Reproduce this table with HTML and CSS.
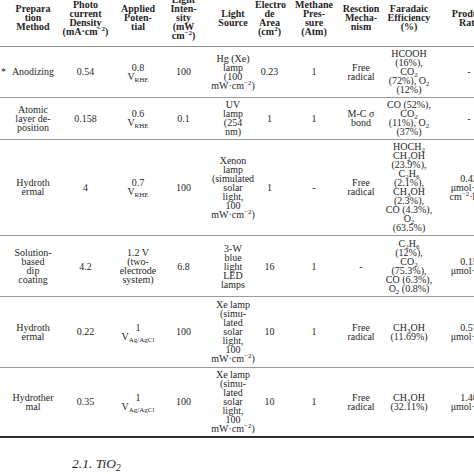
FILE: index.html
```html
<!DOCTYPE html>
<html lang="en">
<head>
<meta charset="utf-8">
<title>Table</title>
<link rel="stylesheet" href="styles.css">
</head>
<body>
<table class="data">
  <colgroup>
    <col class="w0"><col class="w1"><col class="w2"><col class="w3"><col class="w4"><col class="w5"><col class="w6"><col class="w7"><col class="w8"><col class="w9"><col class="w10">
  </colgroup>
  <thead>
    <tr>
      <th></th>
      <th>Prepara<br>tion<br>Method</th>
      <th>Photo<br>current<br>Density<br>(mA·cm<sup>−2</sup>)</th>
      <th class="c3">Applied<br>Poten-<br>tial</th>
      <th>Light<br>Inten-<br>sity<br>(mW<br>cm<sup>−2</sup>)</th>
      <th class="c5">Light<br>Source</th>
      <th class="c6">Electro<br>de<br>Area<br>(cm<sup>2</sup>)</th>
      <th>Methane<br>Pres-<br>sure<br>(Atm)</th>
      <th>Resction<br>Mecha-<br>nism</th>
      <th>Faradaic<br>Efficiency<br>(%)</th>
      <th>Product<br>Rate</th>
    </tr>
  </thead>
  <tbody>
    <tr>
      <td class="ref">*</td>
      <td>Anodizing</td>
      <td>0.54</td>
      <td class="c3">0.8<br>V<sub>RHE</sub></td>
      <td>100</td>
      <td class="c5">Hg (Xe)<br>lamp<br>(100<br>mW·cm<sup>−2</sup>)</td>
      <td class="c6">0.23</td>
      <td>1</td>
      <td>Free<br>radical</td>
      <td>HCOOH<br>(16%),<br>CO<sub>2</sub><br>(72%), O<sub>2</sub><br>(12%)</td>
      <td>-</td>
    </tr>
    <tr>
      <td class="ref"></td>
      <td>Atomic<br>layer de-<br>position</td>
      <td>0.158</td>
      <td class="c3">0.6<br>V<sub>RHE</sub></td>
      <td>0.1</td>
      <td class="c5">UV<br>lamp<br>(254<br>nm)</td>
      <td class="c6">1</td>
      <td>1</td>
      <td>M-C σ<br>bond</td>
      <td>CO (52%),<br>CO<sub>2</sub><br>(11%), O<sub>2</sub><br>(37%)</td>
      <td>-</td>
    </tr>
    <tr>
      <td class="ref"></td>
      <td>Hydroth<br>ermal</td>
      <td>4</td>
      <td class="c3">0.7<br>V<sub>RHE</sub></td>
      <td>100</td>
      <td class="c5">Xenon<br>lamp<br>(simulated<br>solar<br>light,<br>100<br>mW·cm<sup>−2</sup>)</td>
      <td class="c6">1</td>
      <td>-</td>
      <td>Free<br>radical</td>
      <td>HOCH<sub>2</sub><br>CH<sub>2</sub>OH<br>(23.9%),<br>C<sub>2</sub>H<sub>6</sub><br>(2.1%),<br>CH<sub>3</sub>OH<br>(2.3%),<br>CO (4.3%),<br>O<sub>2</sub><br>(63.5%)</td>
      <td>0.42<br>μmol·h<sup>−1</sup><br>cm<sup>−2</sup>·h<sup>−1</sup>)</td>
    </tr>
    <tr class="r4">
      <td class="ref"></td>
      <td>Solution-<br>based<br>dip<br>coating</td>
      <td>4.2</td>
      <td class="c3">1.2 V<br>(two-<br>electrode<br>system)</td>
      <td>6.8</td>
      <td class="c5">3-W<br>blue<br>light<br>LED<br>lamps</td>
      <td class="c6">16</td>
      <td>1</td>
      <td>-</td>
      <td>C<sub>2</sub>H<sub>6</sub><br>(12%),<br>CO<sub>2</sub><br>(75.3%),<br>CO (6.3%),<br>O<sub>2</sub> (0.8%)</td>
      <td>0.15<br>μmol·h<sup>−1</sup></td>
    </tr>
    <tr class="r5">
      <td class="ref"></td>
      <td>Hydroth<br>ermal</td>
      <td>0.22</td>
      <td class="c3">1<br>V<sub>Ag/AgCl</sub></td>
      <td>100</td>
      <td class="c5">Xe lamp<br>(simu-<br>lated<br>solar<br>light,<br>100<br>mW·cm<sup>−2</sup>)</td>
      <td class="c6">10</td>
      <td>1</td>
      <td>Free<br>radical</td>
      <td>CH<sub>3</sub>OH<br>(11.69%)</td>
      <td>0.57<br>μmol·h<sup>−1</sup></td>
    </tr>
    <tr>
      <td class="ref"></td>
      <td>Hydrother<br>mal</td>
      <td>0.35</td>
      <td class="c3">1<br>V<sub>Ag/AgCl</sub></td>
      <td>100</td>
      <td class="c5">Xe lamp<br>(simu-<br>lated<br>solar<br>light,<br>100<br>mW·cm<sup>−2</sup>)</td>
      <td class="c6">10</td>
      <td>1</td>
      <td>Free<br>radical</td>
      <td>CH<sub>3</sub>OH<br>(32.11%)</td>
      <td>1.40<br>μmol·h<sup>−1</sup></td>
    </tr>
  </tbody>
</table>
<h2 class="section">2.1. TiO<sub>2</sub></h2>
</body>
</html>
```
FILE: styles.css
```css
html, body {
  margin: 0;
  padding: 0;
  background: #ffffff;
  overflow: hidden;
}

body {
  width: 474px;
  height: 474px;
  font-family: "Liberation Serif", "Times New Roman", serif;
  color: #1f1f1f;
}

.data {
  border-collapse: collapse;
  table-layout: fixed;
  width: 504px;
  margin-top: -5px;
  font-size: 10px;
  line-height: 9px;
}

.w0 { width: 7px; }
.w1 { width: 52px; }
.w2 { width: 53px; }
.w3 { width: 49px; }
.w4 { width: 45px; }
.w5 { width: 49px; }
.w6 { width: 35px; }
.w7 { width: 48px; }
.w8 { width: 46px; }
.w9 { width: 50px; }
.w10 { width: 70px; }

.data th,
.data td {
  padding: 2px 0 3px;
  text-align: center;
  vertical-align: middle;
  white-space: nowrap;
}

.data thead th {
  padding: 0 0 6px;
  font-weight: bold;
  border-bottom: 1px solid #8c8c8c;
}

.data tbody td {
  border-bottom: 1px solid #9a9a9a;
}

.data tbody tr:last-child td {
  border-bottom: 2px solid #2e2e2e;
}

.data .r4 td { padding-top: 3px; padding-bottom: 3px; }
.data .r5 td { padding-top: 3px; padding-bottom: 4px; }

.data .c3 { padding-left: 3px; }
.data .c5 { padding-left: 5px; }
.data .c6 { padding-right: 6px; }

.data .ref {
  text-align: left;
  padding-left: 1px;
}

sub, sup {
  font-size: 7px;
  line-height: 0;
}

sub { vertical-align: -2px; }
sup { vertical-align: 4px; }

.section {
  margin: 18px 0 0 72px;
  font-size: 13.5px;
  line-height: 16px;
  font-style: italic;
  font-weight: normal;
}

.section sub {
  font-size: 9.5px;
  vertical-align: -3px;
}
```
